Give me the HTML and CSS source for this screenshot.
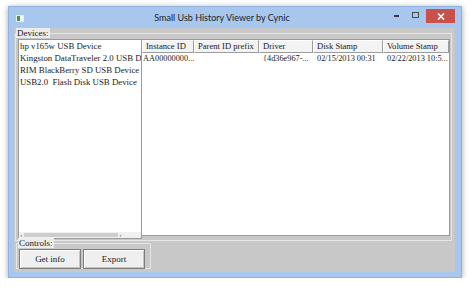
FILE: index.html
```html
<!DOCTYPE html>
<html lang="en">
<head>
    <meta charset="UTF-8">
    <title>Small Usb History Viewer by Cynic</title>
    <link rel="stylesheet" href="styles.css">
</head>
<body>
    <div class="window">
        <div class="titlebar">
            <svg class="app-icon" width="8" height="7" viewBox="0 0 8 7">
                <rect x="0" y="0" width="8" height="7" fill="#e9ece9"/>
                <rect x="1" y="1" width="3" height="5" fill="#3f9a4c"/>
                <rect x="4" y="1" width="3" height="5" fill="#f7f7f7"/>
            </svg>
            <div class="title">Small Usb History Viewer by Cynic</div>
            <div class="caption-buttons">
                <span class="btn-min"></span>
                <span class="btn-max"></span>
                <span class="btn-close">
                    <svg width="8" height="7" viewBox="0 0 8 7">
                        <path d="M1 0.5 L7 6.5 M7 0.5 L1 6.5" stroke="#fff" stroke-width="1.6"/>
                    </svg>
                </span>
            </div>
        </div>

        <div class="client">
            <fieldset class="group devices">
                <legend>Devices:</legend>
                <div class="devices-row">
                    <div class="listbox">
                        <div class="list-items">
                            <div class="list-item">hp v165w USB Device</div>
                            <div class="list-item">Kingston DataTraveler 2.0 USB D</div>
                            <div class="list-item">RIM BlackBerry SD USB Device</div>
                            <div class="list-item">USB2.0&nbsp; Flash Disk USB Device</div>
                        </div>
                        <div class="hscroll">
                            <span class="arrow">&#8249;</span>
                            <span class="thumb"></span>
                            <span class="arrow">&#8250;</span>
                        </div>
                    </div>
                    <div class="listview">
                        <div class="lv-row lv-header">
                            <div class="lv-cell">Instance ID</div>
                            <div class="lv-cell">Parent ID prefix</div>
                            <div class="lv-cell">Driver</div>
                            <div class="lv-cell">Disk Stamp</div>
                            <div class="lv-cell">Volume Stamp</div>
                        </div>
                        <div class="lv-row">
                            <div class="lv-cell first">AA00000000...</div>
                            <div class="lv-cell"></div>
                            <div class="lv-cell">{4d36e967-...</div>
                            <div class="lv-cell">02/15/2013 00:31</div>
                            <div class="lv-cell">02/22/2013 10:5...</div>
                        </div>
                    </div>
                </div>
            </fieldset>

            <fieldset class="group controls">
                <legend>Controls:</legend>
                <div class="button-row">
                    <button>Get info</button>
                    <button>Export</button>
                </div>
            </fieldset>
        </div>
    </div>
</body>
</html>
```

FILE: styles.css
```css
body {
    margin: 0;
    background: #ffffff;
    font-family: "Liberation Serif", "Times New Roman", serif;
    font-size: 9px;
    color: #1a1a1a;
}
.window {
    margin: 6px 0 0 8px;
    width: 454px;
    height: 272px;
    box-sizing: border-box;
    padding: 0 6px 5px 5px;
    background: #a7c7ef;
    border: 1px solid #8fb2de;
    box-shadow: 0 1px 6px rgba(0, 0, 0, 0.35);
    display: flex;
    flex-direction: column;
}
.titlebar {
    height: 21px;
    display: flex;
    align-items: center;
}
.app-icon {
    margin: 1px 0 0 2px;
}
.title {
    flex: 1;
    text-align: center;
    font-family: Lato, "Open Sans", sans-serif;
    font-size: 9px;
    color: #222222;
    margin-left: 26px;
}
.caption-buttons {
    display: flex;
    align-items: flex-start;
    align-self: flex-start;
    height: 14px;
}
.btn-min {
    width: 5px;
    height: 2px;
    background: #3a3a3a;
    margin: 8px 13px 0 0;
}
.btn-max {
    width: 5px;
    height: 4px;
    border: 1px solid #4a4a4a;
    margin: 5px 7px 0 0;
}
.btn-close {
    width: 29px;
    height: 14px;
    margin-top: 2px;
    background: #c9504b;
    display: flex;
    align-items: center;
    justify-content: center;
}
.client {
    flex: 1;
    background: #c8c8c8;
    padding: 0 3px 0 1px;
    display: flex;
    flex-direction: column;
}
.group {
    margin: 0;
    padding: 0;
    border: 1px solid #e6e6e6;
    min-width: 0;
}
.group legend {
    padding: 0 1px;
    background: #ececec;
    line-height: 10px;
}
.devices {
    height: 213px;
    box-sizing: border-box;
}
.devices-row {
    display: flex;
    align-items: flex-start;
    padding: 1px 1px 0 2px;
}
.listbox {
    width: 124px;
    height: 200px;
    box-sizing: border-box;
    background: #ffffff;
    border: 1px solid #9a9a9a;
    display: flex;
    flex-direction: column;
}
.list-items {
    flex: 1;
    overflow: hidden;
}
.list-item {
    height: 12px;
    line-height: 12px;
    padding-left: 1px;
    font-size: 8.8px;
    white-space: nowrap;
    overflow: hidden;
}
.hscroll {
    height: 6px;
    display: flex;
    align-items: center;
    background: #f0f0f0;
    font-size: 7px;
    line-height: 6px;
    color: #555;
}
.hscroll .arrow {
    width: 5px;
    text-align: center;
}
.hscroll .thumb {
    width: 94px;
    height: 4px;
    background: #cdcdcd;
}
.listview {
    flex: 1;
    height: 197px;
    box-sizing: border-box;
    background: #ffffff;
    border: 1px solid #9a9a9a;
    border-left: none;
}
.lv-row {
    display: grid;
    grid-template-columns: 52px 65px 54px 70px 66px;
    height: 12px;
    line-height: 12px;
    font-size: 8.3px;
}
.lv-header {
    height: 13px;
    font-size: 8.6px;
}
.lv-header .lv-cell {
    background: #f3f3f3;
    border: 1px solid #9c9c9c;
    border-left-color: #ffffff;
    border-top-color: #ffffff;
    padding-left: 3px;
    line-height: 11px;
}
.lv-cell {
    padding-left: 4px;
    white-space: nowrap;
    overflow: hidden;
}
.lv-cell.first {
    padding-left: 1px;
}
.controls {
    width: 135px;
    height: 31px;
    box-sizing: border-box;
    margin: -3px 0 0 1px;
}
.controls legend {
    margin-left: 1px;
}
.button-row {
    display: flex;
    gap: 2px;
    padding: 1px 0 0 2px;
}
.button-row button {
    width: 62px;
    height: 20px;
    font-family: "Liberation Serif", "Times New Roman", serif;
    font-size: 9px;
    color: #1a1a1a;
    background: #efefef;
    border: 1px solid #7c7c7c;
    box-shadow: inset 1px 1px 0 #ffffff, inset -1px -1px 0 #c4c4c4;
    padding: 0;
}
```
